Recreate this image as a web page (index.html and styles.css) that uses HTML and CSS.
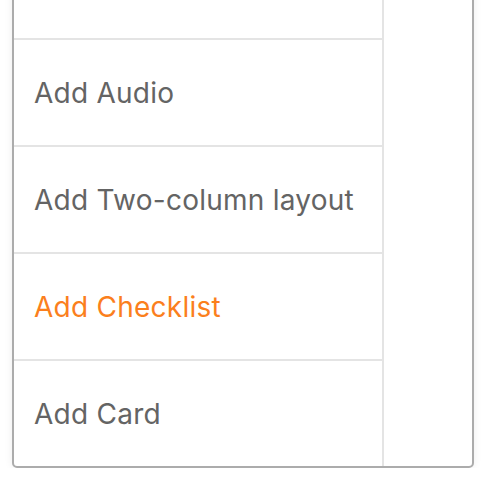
FILE: index.html
```html
<!DOCTYPE html>
<html lang="en">
<head>
<meta charset="utf-8">
<title>Add menu</title>
<link rel="stylesheet" href="styles.css">
</head>
<body>
<div class="card">
  <ul class="menu">
    <li class="item"></li>
    <li class="item">Add Audio</li>
    <li class="item">Add Two-column layout</li>
    <li class="item active">Add Checklist</li>
    <li class="item">Add Card</li>
  </ul>
  <div class="side"></div>
</div>
</body>
</html>
```
FILE: styles.css
```css
html, body {
  margin: 0;
  padding: 0;
  background: #ffffff;
}
body {
  font-family: Inter, "Liberation Sans", sans-serif;
  overflow: hidden;
}
.card {
  display: flex;
  width: 458px;
  margin: -69px 0 0 12px;
  border: 2px solid #acacac;
  border-radius: 5px;
  background: #fff;
  box-shadow: 0 0 8px rgba(0, 0, 0, 0.07);
}
.menu {
  list-style: none;
  margin: 0;
  padding: 0;
  width: 368px;
  border-right: 2px solid #e4e4e4;
}
.item {
  height: 105px;
  display: flex;
  align-items: center;
  padding-left: 20px;
  font-size: 28px;
  letter-spacing: 0.25px;
  color: #646464;
  border-bottom: 2px solid #e4e4e4;
}
.item:last-child {
  border-bottom: none;
}
.item.active {
  color: #fb7f1d;
}
.side {
  flex: 1;
}
```
